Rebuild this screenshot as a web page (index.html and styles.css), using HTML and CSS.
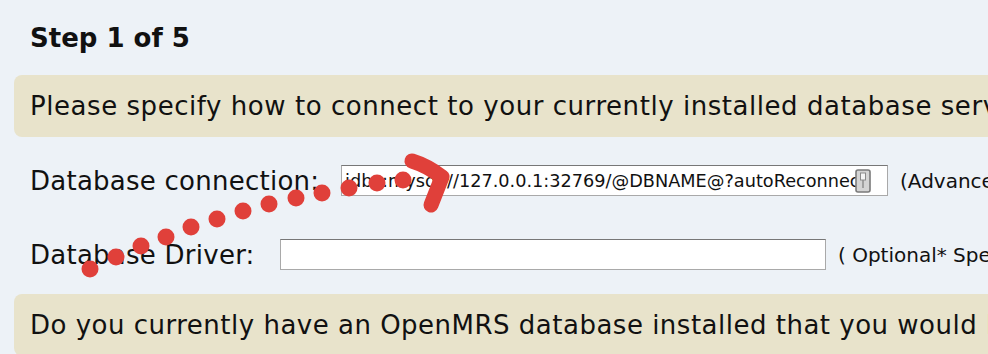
FILE: index.html
```html
<!DOCTYPE html>
<html lang="en">
<head>
    <meta charset="UTF-8">
    <title>OpenMRS - Installation Wizard</title>
    <link rel="stylesheet" href="styles.css">
</head>
<body>

    <div class="wizard">
        <h2 class="step-title">Step 1 of 5</h2>

        <div class="note">Please specify how to connect to your currently installed database server.</div>

        <div class="row row-first">
            <label class="label label-conn" for="database_connection">Database connection:</label>
            <div class="input-wrap">
                <input type="text" class="field field-conn" id="database_connection" value="jdbc:mysql://127.0.0.1:32769/@DBNAME@?autoReconnect=true&amp;sessionVariables=default_storage_engine=InnoDB&amp;useUnicode=true&amp;characterEncoding=UTF-8">
                <span class="key-icon">
                    <svg width="16" height="24" viewBox="0 0 16 24">
                        <rect x="1" y="1" width="14" height="22" rx="2" fill="#d4d4d4" stroke="#7a7a7a" stroke-width="1.6"/>
                        <rect x="5.5" y="4" width="5" height="7" fill="#f4f4f4" stroke="#8a8a8a" stroke-width="1"/>
                        <line x1="8" y1="11" x2="8" y2="19" stroke="#8a8a8a" stroke-width="1.4"/>
                    </svg>
                </span>
            </div>
            <span class="hint">(Advanced users only: change the connection string)</span>
        </div>

        <div class="row row-second">
            <label class="label label-driver" for="database_driver">Database Driver:</label>
            <input type="text" class="field field-driver" id="database_driver" value="">
            <span class="hint">( Optional* Specify the driver class name )</span>
        </div>

        <div class="note note-last">Do you currently have an OpenMRS database installed that you would like to connect to?</div>
    </div>

    <svg class="arrow" width="988" height="354" viewBox="0 0 988 354">
        <g fill="#e0403a">
            <circle cx="90" cy="269" r="8.5"/>
            <circle cx="116" cy="257" r="8.5"/>
            <circle cx="141" cy="246" r="8.5"/>
            <circle cx="166" cy="237" r="8.5"/>
            <circle cx="191" cy="227" r="8.5"/>
            <circle cx="217" cy="219" r="8.5"/>
            <circle cx="243" cy="211" r="8.5"/>
            <circle cx="269" cy="204" r="8.5"/>
            <circle cx="296" cy="198" r="8.5"/>
            <circle cx="322" cy="193" r="8.5"/>
            <circle cx="349" cy="188" r="8.5"/>
            <circle cx="377" cy="183" r="8.5"/>
            <circle cx="403" cy="180" r="8.5"/>
        </g>
        <path d="M412 161 Q428 166 442 177 L431 205" fill="none" stroke="#e0403a" stroke-width="15" stroke-linecap="round" stroke-linejoin="round"/>
    </svg>

</body>
</html>
```

FILE: styles.css
```css
body {
    margin: 0;
    background-color: #edf2f7;
    color: #111;
    font-family: Verdana, "DejaVu Sans", sans-serif;
    overflow: hidden;
}
.wizard {
    padding-left: 14px;
    width: 1400px;
    white-space: nowrap;
}
.step-title {
    margin: 0;
    padding: 25px 0 0 16px;
    height: 50px;
    font-size: 26px;
    font-weight: bold;
    line-height: 26px;
}
.note {
    background: #e8e3cb;
    border-radius: 8px;
    height: 62px;
    line-height: 62px;
    padding-left: 16px;
    font-size: 26px;
    letter-spacing: 0.55px;
    overflow: hidden;
}
.note-last {
    margin-top: 24px;
    letter-spacing: 0.5px;
}
.row {
    display: flex;
    align-items: center;
    height: 31px;
    padding-left: 16px;
}
.row-first {
    margin-top: 28px;
}
.row-second {
    margin-top: 43px;
}
.label {
    font-size: 26px;
    letter-spacing: 0.25px;
    flex-shrink: 0;
}
.label-conn {
    width: 311px;
}
.label-driver {
    width: 250px;
}
.input-wrap {
    position: relative;
    display: flex;
}
.field {
    box-sizing: border-box;
    height: 31px;
    border: 1px solid #a9a9a9;
    border-top-color: #777;
    background: #fff;
    padding: 0 3px;
    font-family: Verdana, "DejaVu Sans", sans-serif;
    font-size: 17.7px;
    color: #111;
    outline: none;
}
.field-conn {
    width: 547px;
    padding-right: 30px;
}
.field-driver {
    width: 546px;
}
.key-icon {
    position: absolute;
    right: 17px;
    top: 4px;
    line-height: 0;
}
.hint {
    margin-left: 12px;
    font-size: 20px;
}
.arrow {
    position: absolute;
    top: 0;
    left: 0;
    pointer-events: none;
}
```
